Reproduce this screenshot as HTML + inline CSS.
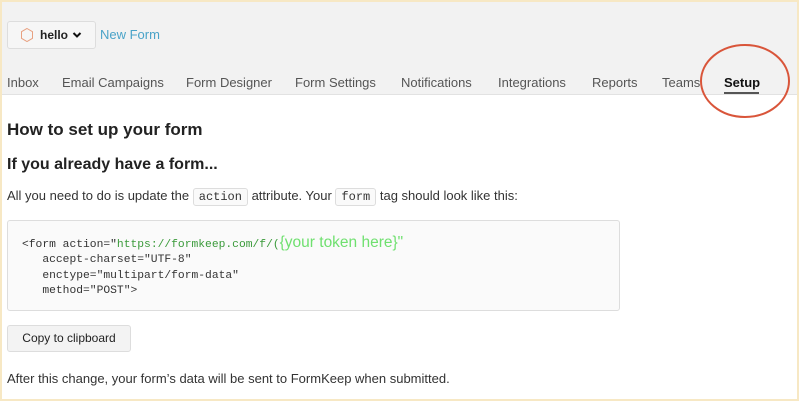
<!DOCTYPE html>
<html><head><style>
*{margin:0;padding:0;box-sizing:border-box}
body{width:799px;height:401px;overflow:hidden;background:#fff;font-family:"Liberation Sans",sans-serif;color:#222;position:relative}
.frame{position:absolute;inset:0;border:2px solid #f7e8c4;pointer-events:none;z-index:5}
.hdr{position:absolute;left:0;top:0;width:799px;height:95px;background:#f2f2f2;border-bottom:1px solid #e2e2e2}
.abs{position:absolute;white-space:nowrap}
.btn{position:absolute;left:7px;top:21px;width:89px;height:28px;border:1px solid #ddd;border-radius:3px;background:#f6f6f6}
.tab{position:absolute;top:75px;font-size:13px;color:#555}
code{font-family:"Liberation Mono",monospace;font-size:12px;border:1px solid #ddd;border-radius:3px;padding:1px 5px;background:#fafafa}
.codebox{position:absolute;left:7px;top:220px;width:613px;height:91px;border:1px solid #ddd;border-radius:3px;background:#fafafa;font-family:"Liberation Mono",monospace;font-size:11.3px;line-height:15.3px;padding:14px 0 0 14px;color:#333;white-space:pre}
.cb{position:absolute;left:7px;top:325px;width:124px;height:27px;border:1px solid #ddd;border-radius:3px;background:#f3f3f3;font-size:12px;text-align:center;line-height:25px;color:#222}
</style></head><body>
<div class="hdr"></div>
<div class="btn"></div>
<svg class="abs" style="left:19px;top:27px" width="16" height="16" viewBox="0 0 16 16"><polygon points="8,1.5 13.5,4.7 13.5,11.3 8,14.5 2.5,11.3 2.5,4.7" fill="none" stroke="#e8a080" stroke-width="1"/></svg>
<div class="abs" style="left:40px;top:28px;font-size:12px;font-weight:bold">hello</div>
<svg class="abs" style="left:72px;top:31px" width="10" height="8" viewBox="0 0 10 8"><path d="M1.5 2 L5 5.5 L8.5 2" fill="none" stroke="#111" stroke-width="2"/></svg>
<div class="abs" style="left:100px;top:27px;font-size:13px;color:#4aa3c8">New Form</div>
<div class="tab" style="left:7px">Inbox</div>
<div class="tab" style="left:62px">Email Campaigns</div>
<div class="tab" style="left:186px">Form Designer</div>
<div class="tab" style="left:295px">Form Settings</div>
<div class="tab" style="left:401px">Notifications</div>
<div class="tab" style="left:498px">Integrations</div>
<div class="tab" style="left:592px">Reports</div>
<div class="tab" style="left:662px">Teams</div>
<div class="tab" style="left:724px;color:#111;font-weight:bold">Setup</div>
<div class="abs" style="left:724px;top:92px;width:35px;height:2px;background:#555"></div>
<svg class="abs" style="left:698px;top:42px;z-index:4" width="94" height="78" viewBox="0 0 94 78"><ellipse cx="47" cy="39" rx="44" ry="36" fill="none" stroke="#d9553a" stroke-width="2"/></svg>
<div class="abs" style="left:7px;top:120px;font-size:17px;font-weight:bold;color:#222">How to set up your form</div>
<div class="abs" style="left:7px;top:156px;font-size:16px;font-weight:bold;color:#222">If you already have a form...</div>
<div class="abs" style="left:7px;top:188px;font-size:13px;color:#333">All you need to do is update the <code>action</code> attribute. Your <code>form</code> tag should look like this:</div>
<div class="codebox">&lt;form action="<span style="color:#3a9a3a">https://formkeep.com/f/(</span><span style="font-family:'Liberation Sans',sans-serif;font-size:15.5px;color:#6fe06f">{your token here}"</span>
   accept-charset="UTF-8"
   enctype="multipart/form-data"
   method="POST"&gt;</div>
<div class="cb">Copy to clipboard</div>
<div class="abs" style="left:7px;top:371px;font-size:13px;color:#333">After this change, your form’s data will be sent to FormKeep when submitted.</div>
<div class="frame"></div>
</body></html>
